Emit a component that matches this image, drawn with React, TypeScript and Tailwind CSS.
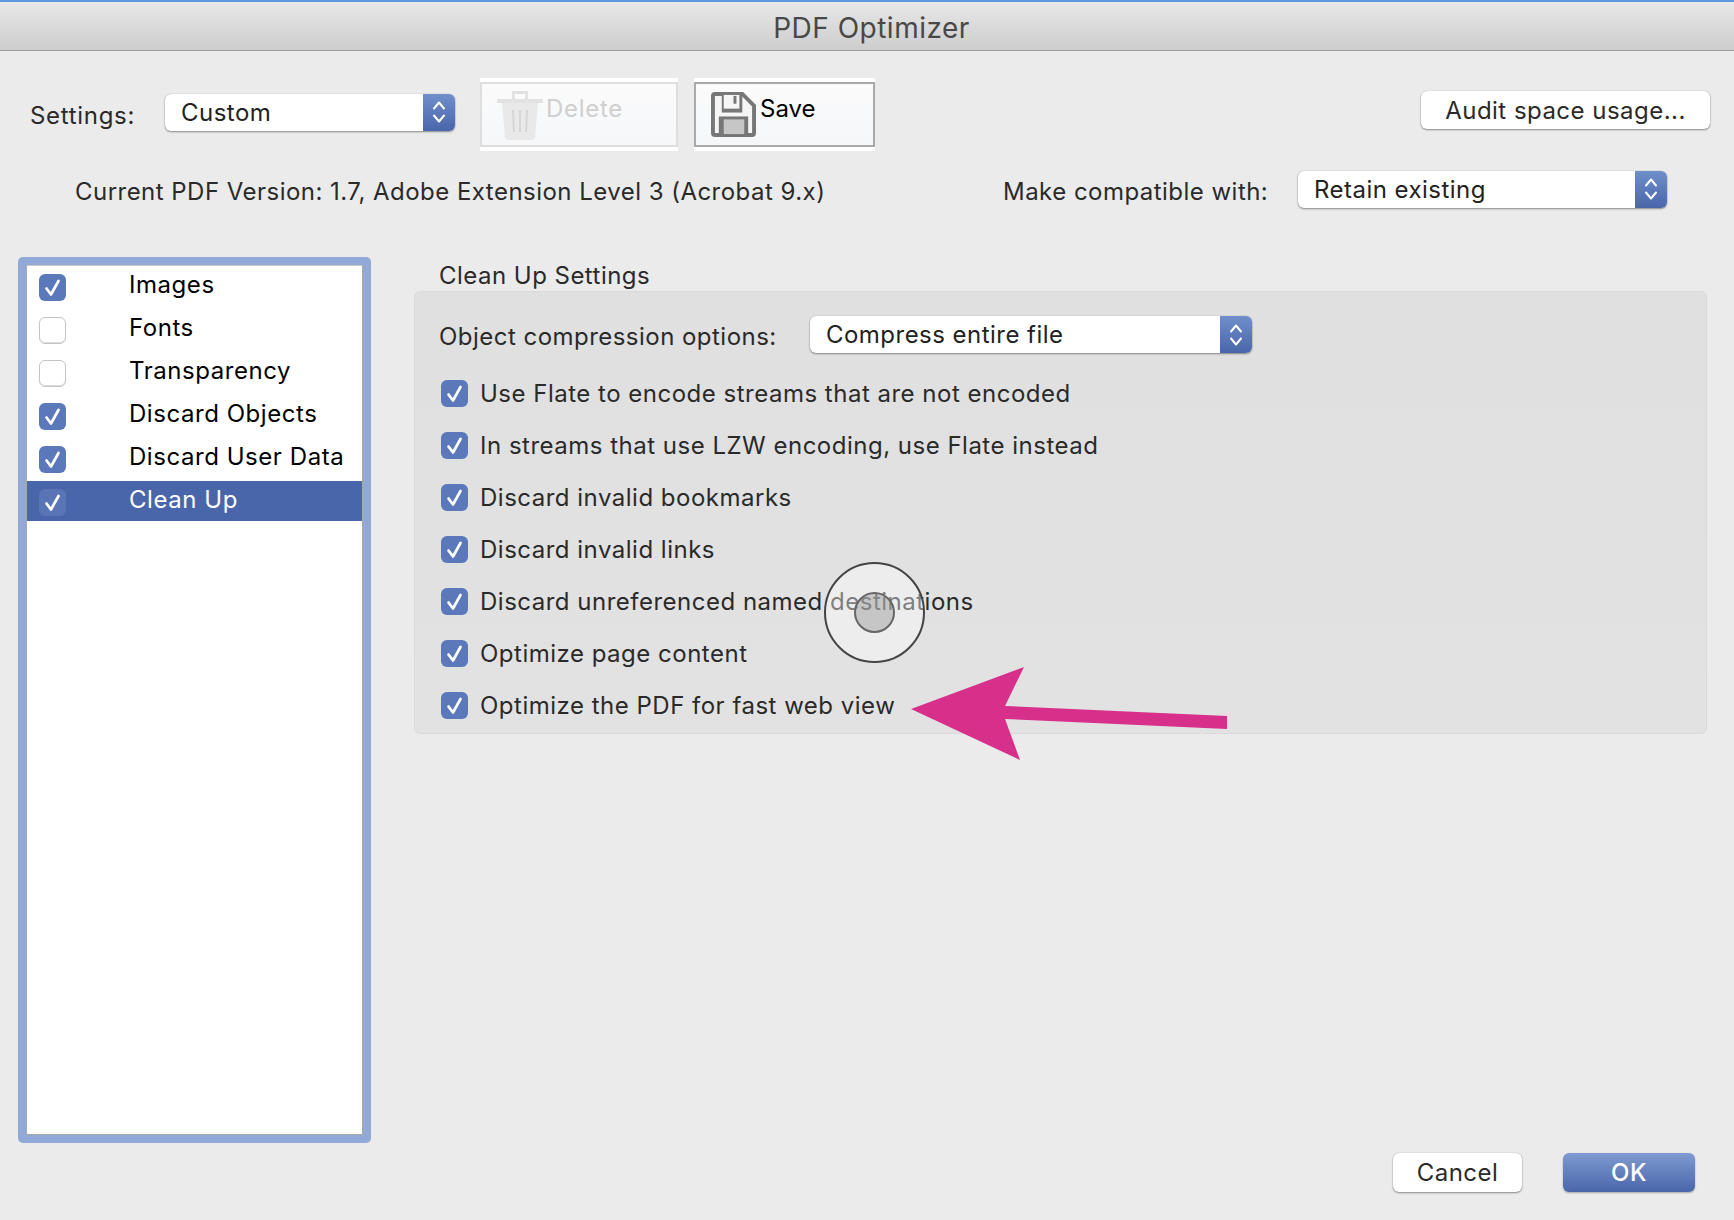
const listItems = [
  { label: "Images", checked: true },
  { label: "Fonts", checked: false },
  { label: "Transparency", checked: false },
  { label: "Discard Objects", checked: true },
  { label: "Discard User Data", checked: true },
  { label: "Clean Up", checked: true, selected: true },
];

const cleanUpOptions = [
  "Use Flate to encode streams that are not encoded",
  "In streams that use LZW encoding, use Flate instead",
  "Discard invalid bookmarks",
  "Discard invalid links",
  "Discard unreferenced named destinations",
  "Optimize page content",
  "Optimize the PDF for fast web view",
];

const Check = () => (
  <svg viewBox="0 0 27 27" className="h-[27px] w-[27px]">
    <path d="M7.5 14.5l4.5 6L19.5 7" fill="none" stroke="#fff" strokeWidth="2.7" strokeLinecap="round" strokeLinejoin="round" />
  </svg>
);

const CheckBox = ({ checked, selected }: { checked: boolean; selected?: boolean }) => {
  if (!checked) {
    return <div className="h-[27px] w-[27px] shrink-0 rounded-[6px] border border-[#c4c4c4] bg-white shadow-[inset_0_-1px_0_#ddd]" />;
  }
  return (
    <div className={`h-[27px] w-[27px] shrink-0 rounded-[6px] ${selected ? "bg-[#5a75b5]" : "bg-[#5a78ba]"}`}>
      <Check />
    </div>
  );
};

const Select = ({ value, className }: { value: string; className: string }) => (
  <div className={`flex h-[37px] overflow-hidden rounded-[6px] bg-white shadow-[0_1px_2px_rgba(0,0,0,0.4),0_0_1px_rgba(0,0,0,0.3)] ${className}`}>
    <div className="flex-1 pl-[16px] text-[24px] leading-[37px] text-[#222]">{value}</div>
    <div className="flex w-[32px] items-center justify-center bg-gradient-to-b from-[#6f8fca] to-[#4a66ab]">
      <svg viewBox="0 0 16 28" className="h-[28px] w-[16px]">
        <path d="M3 10.5L8 4.5l5 6M3 17.5l5 6 5-6" fill="none" stroke="#fff" strokeWidth="2" strokeLinecap="round" strokeLinejoin="round" />
      </svg>
    </div>
  </div>
);

const App = () => {
  return (
    <div className="relative flex h-[1220px] w-[1734px] flex-col overflow-hidden bg-[#ebebeb] font-['Inter',sans-serif] text-[24px] tracking-[0.47px] text-[#2a2a2a]">
      {/* title bar */}
      <div className="flex h-[51px] items-center justify-center border-t-2 border-b border-t-[#5b96e0] border-b-[#9e9e9e] bg-gradient-to-b from-[#e8e8e8] to-[#cdcdcd] pt-[4px] pl-[9px] text-[28px] tracking-[0.5px] text-[#484848]">
        PDF Optimizer
      </div>

      {/* settings row */}
      <div className="mt-[31px] flex h-[65px] items-center">
        <span className="ml-[30px] mt-[2px] w-[135px] tracking-[0.7px]">Settings:</span>
        <Select value="Custom" className="-mt-[5px] w-[290px]" />
        <div className="ml-[25px] flex h-[65px] w-[198px] items-center border-2 border-[#dedede] bg-gradient-to-b from-[#fbfbfb] to-[#f5f7f9] pl-[14px] text-[#cfcfcf] shadow-[0_-4px_0_#fff,0_4px_0_#fff]">
          <svg viewBox="0 0 48 52" className="-mt-[2px] h-[52px] w-[48px] shrink-0">
            <path d="M1 11h46v4H1zM16 11V3h16v8h-3V6H19v5z" fill="#e2e2e2" />
            <path d="M6 15h36l-3 34a3 3 0 0 1-3 3H12a3 3 0 0 1-3-3z" fill="#e9e9e9" />
            <path d="M17 22l1 22M24 22v22M31 22l-1 22" stroke="#d6d6d6" strokeWidth="2" />
          </svg>
          <span className="-mt-[12px] ml-[2px] tracking-[0.7px]">Delete</span>
        </div>
        <div className="ml-[16px] flex h-[65px] w-[181px] items-center border-2 border-[#a9a9a9] bg-gradient-to-b from-[#fbfbfb] to-[#f5f7f9] pl-[15px] tracking-normal text-black shadow-[0_-4px_0_#fff,0_4px_0_#fff]">
          <svg viewBox="0 0 46 46" className="-mt-[1px] h-[45px] w-[45px] shrink-0">
            <path d="M4 2h28l12 12v28a2 2 0 0 1-2 2H4a2 2 0 0 1-2-2V4a2 2 0 0 1 2-2z" fill="#f5f5f5" stroke="#777" strokeWidth="4" />
            <path d="M11 3h21v18H11z" fill="#777" />
            <path d="M13 3h16v14H13z" fill="#f5f5f5" />
            <path d="M23 4h3v8h-3z" fill="#777" />
            <path d="M8 25h30v19H8z" fill="#777" />
            <path d="M13 28h21v15H13z" fill="#c6c6c6" />
          </svg>
          <span className="-mt-[12px] ml-[4px]">Save</span>
        </div>
        <button className="-mt-[9px] ml-[546px] h-[38px] w-[289px] rounded-[6px] bg-white pt-[2px] shadow-[0_1px_2px_rgba(0,0,0,0.4),0_0_1px_rgba(0,0,0,0.3)]">
          Audit space usage...
        </button>
      </div>

      {/* version row */}
      <div className="mt-[23px] flex h-[38px] items-center">
        <span className="ml-[75px] mt-[6px] w-[928px]">Current PDF Version: 1.7, Adobe Extension Level 3 (Acrobat 9.x)</span>
        <span className="mt-[6px] w-[295px]">Make compatible with:</span>
        <Select value="Retain existing" className="w-[369px]" />
      </div>

      {/* main */}
      <div className="mt-[49px] flex">
        <div className="ml-[18px] h-[886px] w-[353px] rounded-[5px] bg-[#92a8d6] p-[8px]">
          <div className="h-full border border-[#a8a8a8] border-t-[#c8c8c8] bg-white pt-[8px] tracking-[0.55px] text-black">
            {listItems.map((item) => (
              <div
                key={item.label}
                className={`flex items-start ${item.selected ? "-mt-[8px] h-[40px] bg-[#4a66ab] pt-[8px] text-white" : "h-[43px]"}`}
              >
                <div className="ml-[12px]">
                  <CheckBox checked={item.checked} selected={item.selected} />
                </div>
                <span className="-mt-[7px] ml-[63px]">{item.label}</span>
              </div>
            ))}
          </div>
        </div>

        <div className="ml-[43px] w-[1293px]">
          <div className="h-[34px] pl-[25px] leading-[38px]">Clean Up Settings</div>
          <div className="h-[443px] rounded-[6px] border border-[#dadada] bg-gradient-to-b from-[#e0e0e0] to-[#e2e2e2] pl-[24px] pt-[24px]">
            <div className="flex h-[37px] items-center">
              <span className="mt-[4px] w-[371px]">Object compression options:</span>
              <Select value="Compress entire file" className="w-[442px]" />
            </div>
            <div className="mt-[27px] flex flex-col gap-[25px]">
              {cleanUpOptions.map((option) => (
                <div key={option} className="flex h-[27px] items-center pl-[2px]">
                  <CheckBox checked />
                  <span className="ml-[12px] mt-[1px] tracking-[0.5px]">{option}</span>
                </div>
              ))}
            </div>
          </div>
        </div>
      </div>

      {/* footer */}
      <div className="mt-[10px] flex h-[39px] justify-end pr-[39px]">
        <button className="h-[39px] w-[129px] rounded-[6px] bg-white shadow-[0_1px_2px_rgba(0,0,0,0.4),0_0_1px_rgba(0,0,0,0.3)]">Cancel</button>
        <button className="ml-[41px] h-[39px] w-[132px] rounded-[6px] bg-gradient-to-b from-[#7f9bd0] to-[#4a66ab] font-medium text-white shadow-[0_1px_2px_rgba(0,0,0,0.3)]">OK</button>
      </div>

      {/* click marker */}
      <div className="absolute left-[824px] top-[562px] flex h-[101px] w-[101px] items-center justify-center rounded-full border-2 border-[#444] bg-white/40">
        <div className="h-[41px] w-[41px] rounded-full border-2 border-[#666] bg-[#8c8c8c]/40" />
      </div>

      {/* annotation arrow */}
      <svg viewBox="0 0 320 95" className="absolute left-[910px] top-[666px] h-[95px] w-[320px]">
        <path d="M1 43L114 1 95 40 317 50v13L95 53l15 41z" fill="#d6308b" />
      </svg>
    </div>
  );
};

export default App;
